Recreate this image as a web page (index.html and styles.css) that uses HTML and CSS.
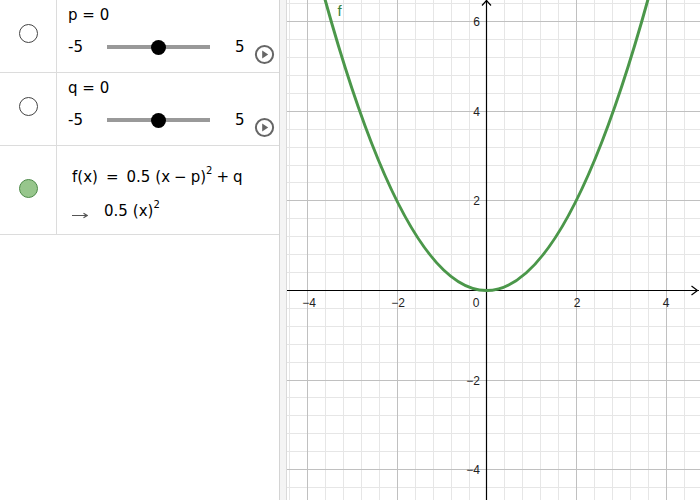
FILE: index.html
```html
<!DOCTYPE html>
<html>
<head>
<meta charset="utf-8">
<link rel="stylesheet" href="styles.css">
</head>
<body>
<div class="app">
  <div class="algebra">
    <div class="row row-slider">
      <div class="marker"><span class="radio"></span></div>
      <div class="content">
        <div class="label">p = 0</div>
        <div class="slider-line">
          <span class="min">-5</span>
          <span class="track"><span class="knob"></span></span>
          <span class="max">5</span>
          <span class="play"><svg width="21" height="21" viewBox="0 0 21 21"><circle cx="10.5" cy="10.5" r="8.6" fill="none" stroke="#666" stroke-width="2"/><path d="M8.2 6.6 L14.2 10.5 L8.2 14.4 Z" fill="#666"/></svg></span>
        </div>
      </div>
    </div>
    <div class="row row-slider">
      <div class="marker"><span class="radio"></span></div>
      <div class="content">
        <div class="label">q = 0</div>
        <div class="slider-line">
          <span class="min">-5</span>
          <span class="track"><span class="knob"></span></span>
          <span class="max">5</span>
          <span class="play"><svg width="21" height="21" viewBox="0 0 21 21"><circle cx="10.5" cy="10.5" r="8.6" fill="none" stroke="#666" stroke-width="2"/><path d="M8.2 6.6 L14.2 10.5 L8.2 14.4 Z" fill="#666"/></svg></span>
        </div>
      </div>
    </div>
    <div class="row row-func">
      <div class="marker"><span class="dot"></span></div>
      <div class="content content-func">
        <div class="math">f(x)<span class="rel">=</span>0.5<span class="sp"></span>(x<span class="bin">−</span>p)<sup>2</sup><span class="plus">+</span>q</div>
        <div class="math math2"><svg class="arrow" width="16" height="8" viewBox="0 0 16 8"><path d="M0 4.5 H14.5 M11.5 2.2 L15.2 4.5 L11.5 6.8" fill="none" stroke="#555" stroke-width="1.2"/></svg>0.5<span class="sp"></span>(x)<sup>2</sup></div>
      </div>
    </div>
  </div>
  <div class="splitter"></div>
  <div class="graphics">
    <svg width="413" height="500" viewBox="0 0 413 500">
      <path class="minor" d="M2.5 0V500M38.5 0V500M56.5 0V500M74.5 0V500M92.5 0V500M128.5 0V500M146.5 0V500M164.5 0V500M182.5 0V500M217.5 0V500M235.5 0V500M253.5 0V500M271.5 0V500M307.5 0V500M325.5 0V500M343.5 0V500M361.5 0V500M397.5 0V500M0 3.5H413M0 39.5H413M0 57.5H413M0 75.5H413M0 93.5H413M0 129.5H413M0 147.5H413M0 165.5H413M0 182.5H413M0 218.5H413M0 236.5H413M0 254.5H413M0 272.5H413M0 308.5H413M0 326.5H413M0 344.5H413M0 362.5H413M0 397.5H413M0 415.5H413M0 433.5H413M0 451.5H413M0 487.5H413"/>
      <path class="major" d="M20.5 0V500M110.5 0V500M289.5 0V500M379.5 0V500M0 21.5H413M0 111.5H413M0 200.5H413M0 380.5H413M0 469.5H413"/>
      <path class="axis" d="M199.5 0V500M0 290.5H412"/>
      <path class="axis-arrow" d="M404.5 286L410.5 290.5L404.5 295M195 5.5L199.5 0.5L204 5.5"/>
      <g class="ticklabels">
        <text x="193" y="26" text-anchor="end">6</text>
        <text x="193" y="116" text-anchor="end">4</text>
        <text x="193" y="205" text-anchor="end">2</text>
        <text x="193" y="385" text-anchor="end">−2</text>
        <text x="193" y="474" text-anchor="end">−4</text>
        <text x="22" y="307" text-anchor="middle">−4</text>
        <text x="111" y="307" text-anchor="middle">−2</text>
        <text x="189" y="307" text-anchor="middle">0</text>
        <text x="290" y="307" text-anchor="middle">2</text>
        <text x="379" y="307" text-anchor="middle">4</text>
      </g>
      <path class="curve" d="M29.26 -32.96 Q199.5 613.96 369.74 -32.96"/>
      <text class="flabel" x="50.5" y="16">f</text>
    </svg>
  </div>
</div>
</body>
</html>
```
FILE: styles.css
```css
html, body {
  margin: 0;
  padding: 0;
}
body {
  width: 700px;
  height: 500px;
  overflow: hidden;
  background: #fff;
  font-family: "DejaVu Sans", sans-serif;
  color: #000;
}
.app {
  display: flex;
  height: 500px;
}
.algebra {
  width: 279px;
  flex: none;
  border-right: 1px solid #d4d4d4;
}
.splitter {
  width: 6px;
  flex: none;
  background: #f4f4f4;
  border-right: 1px solid #dadada;
}
.graphics {
  flex: 1;
  overflow: hidden;
}
.graphics svg {
  display: block;
}
.row {
  display: flex;
  border-bottom: 1px solid #dcdcdc;
}
.row-slider {
  height: 72px;
}
.row-func {
  height: 88px;
}
.marker {
  width: 56px;
  flex: none;
  border-right: 1px solid #dcdcdc;
  display: flex;
  justify-content: center;
  align-items: flex-start;
}
.radio {
  width: 17px;
  height: 17px;
  border: 1px solid #444;
  border-radius: 50%;
  margin-top: 24px;
  background: #fff;
}
.dot {
  width: 17px;
  height: 17px;
  border: 1px solid #4d8a48;
  border-radius: 50%;
  margin-top: 32.5px;
  background: #97c68c;
}
.content {
  flex: 1;
  padding-left: 11px;
}
.label {
  font-size: 15px;
  line-height: 18px;
  padding-top: 6px;
}
.slider-line {
  display: flex;
  align-items: center;
  height: 20px;
  margin-top: 13px;
  font-size: 15px;
  line-height: 18px;
}
.min {
  width: 39px;
  flex: none;
}
.track {
  width: 103px;
  height: 4px;
  flex: none;
  background: #999;
  display: flex;
  align-items: center;
  justify-content: center;
}
.knob {
  width: 15px;
  height: 15px;
  flex: none;
  border-radius: 50%;
  background: #000;
}
.max {
  margin-left: 25px;
}
.play {
  margin-left: 9px;
  align-self: flex-start;
  margin-top: 7px;
  height: 21px;
}
.play svg {
  display: block;
}
.content-func {
  padding-top: 22px;
  padding-left: 15px;
}
.math {
  font-size: 15px;
  line-height: 18px;
  white-space: nowrap;
}
.math2 {
  margin-top: 16px;
}
.math sup {
  font-size: 10px;
  line-height: 0;
  vertical-align: 8px;
}
.rel {
  margin: 0 8px;
}
.sp {
  display: inline-block;
  width: 5px;
}
.bin {
  margin: 0 4px;
}
.plus {
  margin: 0 4px 0 4px;
}
.arrow {
  vertical-align: -3px;
  margin-right: 16px;
}
.minor {
  stroke: #e6e6e6;
  stroke-width: 1;
  fill: none;
}
.major {
  stroke: #c0c0c0;
  stroke-width: 1;
  fill: none;
}
.axis {
  stroke: #000;
  stroke-width: 1.2;
  fill: none;
}
.axis-arrow {
  stroke: #000;
  stroke-width: 1.2;
  fill: none;
}
.ticklabels text {
  font-family: "Liberation Sans", sans-serif;
  font-size: 12px;
  fill: #222;
}
.curve {
  fill: none;
  stroke: #4b974a;
  stroke-width: 3;
}
.flabel {
  font-family: "Liberation Sans", sans-serif;
  font-size: 15px;
  fill: #3a803a;
}
```
